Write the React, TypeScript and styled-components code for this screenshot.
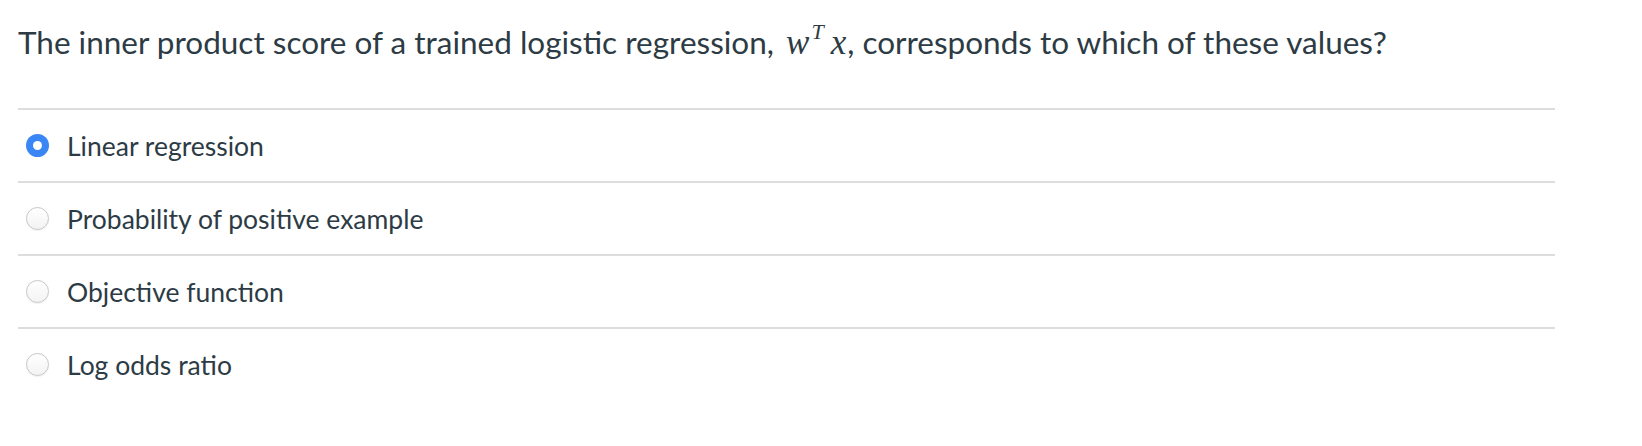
import React from 'react'
import styled, { createGlobalStyle } from 'styled-components'

const GlobalStyle = createGlobalStyle`
  html, body {
    margin: 0;
    padding: 0;
    background: #fff;
  }
  body {
    font-family: Lato, "Open Sans", sans-serif;
    color: #2d3b45;
  }
`

const Page = styled.div`
  padding: 19px 87px 0 18px;
`

const Question = styled.div`
  font-size: 31.5px;
  line-height: 46px;
  padding-bottom: 42px;
  border-bottom: 2px solid #ddd;
`

const Math = styled.span`
  font-family: "Liberation Serif", "DejaVu Serif", serif;
  font-style: italic;
  font-size: 35px;
  margin: 0 1px 0 4px;
`

const Sup = styled.sup`
  font-size: 22px;
  margin: 0 7px 0 2px;
  vertical-align: 15px;
  line-height: 0;
`

const Answers = styled.ul`
  list-style: none;
  margin: 0;
  padding: 0;
`

const Answer = styled.li`
  display: flex;
  align-items: center;
  height: 71px;
  border-bottom: 2px solid #ddd;
  font-size: 26.5px;

  &:last-child {
    border-bottom: none;
  }
`

const Radio = styled.span`
  box-sizing: border-box;
  width: 23px;
  height: 23px;
  border-radius: 50%;
  margin: 0 18px 0 8px;
  flex-shrink: 0;
  background: linear-gradient(#fff, #f3f3f3);
  border: 1px solid #c6c6c6;
  box-shadow: 0 1px 1px rgba(0, 0, 0, 0.05);
`

const Checked = styled.span`
  box-sizing: border-box;
  width: 23px;
  height: 23px;
  border-radius: 50%;
  margin: 0 18px 0 8px;
  background: #3b86f5;
  display: flex;
  align-items: center;
  justify-content: center;
  flex-shrink: 0;
`

const Dot = styled.span`
  display: block;
  width: 9px;
  height: 9px;
  border-radius: 50%;
  background: #fff;
`

const answers = [
  'Linear regression',
  'Probability of positive example',
  'Objective function',
  'Log odds ratio'
]

const App = () => {
  const selected = 0

  return (
    <>
      <GlobalStyle />
      <Page>
        <Question>
          The inner product score of a trained logistic regression,{' '}
          <Math>w<Sup>T</Sup>x</Math>, corresponds to which of these values?
        </Question>
        <Answers>
          {answers.map((a, i) => (
            <Answer key={a}>
              {i === selected ? <Checked><Dot /></Checked> : <Radio />}
              {a}
            </Answer>
          ))}
        </Answers>
      </Page>
    </>
  )
}

export default App
